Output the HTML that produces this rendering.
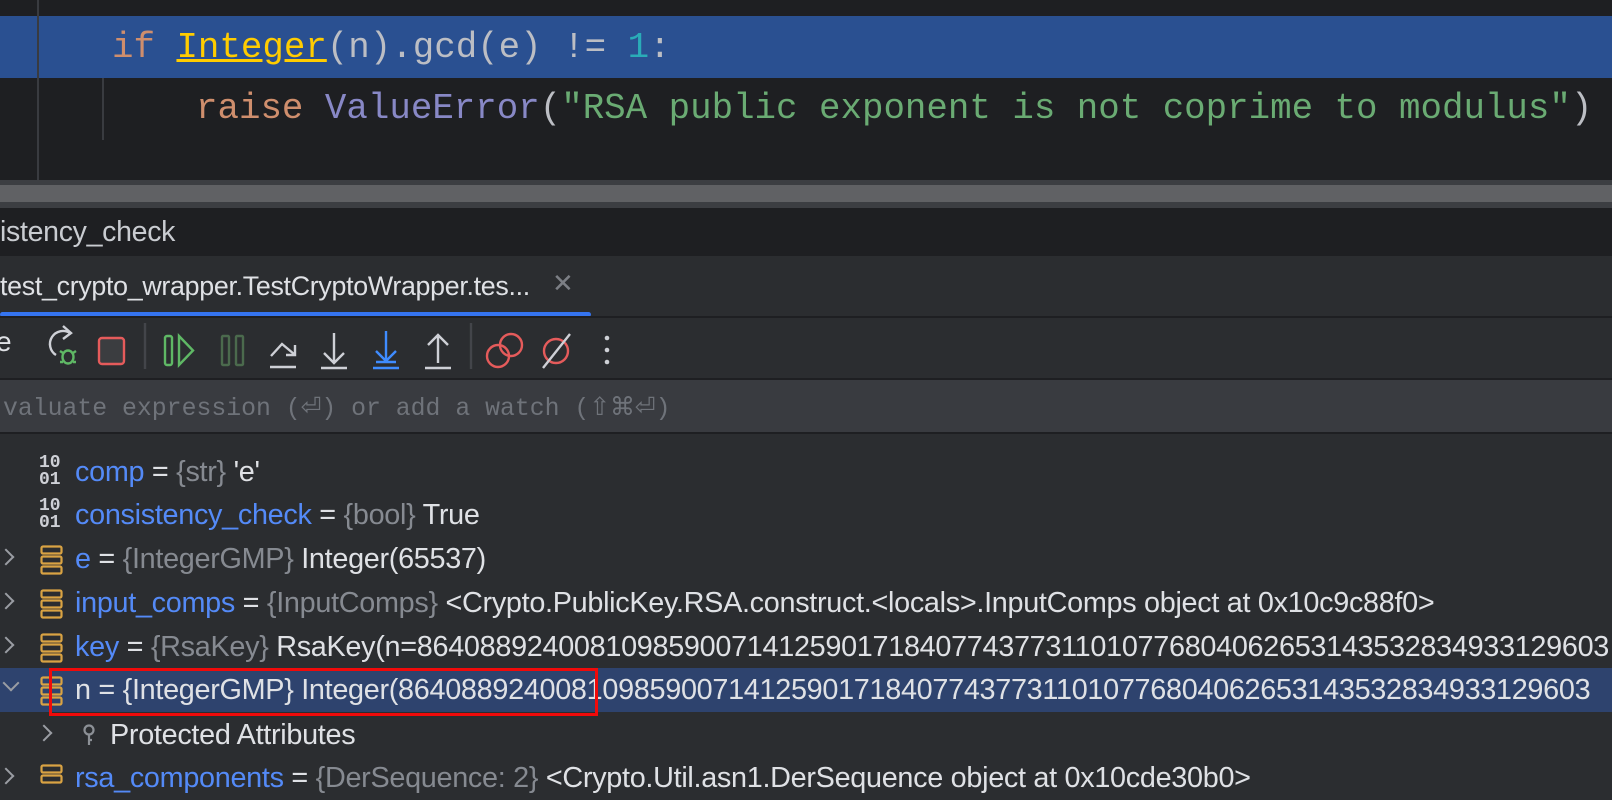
<!DOCTYPE html>
<html><head><meta charset="utf-8"><style>
*{margin:0;padding:0;box-sizing:border-box}
body{width:1612px;height:778px;overflow:hidden;background:#2b2d30;position:relative;font-family:"Liberation Sans",sans-serif}
.abs{position:absolute}
.mono{font-family:"Liberation Mono",monospace;white-space:pre}
.code{font-size:35.8px;line-height:40px}
.row{position:absolute;left:0;width:1612px;height:44px;font-size:28.8px;line-height:44px;white-space:nowrap;color:#dfe1e5;letter-spacing:-0.3px}
.nm{color:#548af7}.ty{color:#868a91}
.chev{position:absolute;top:14px;width:12px;height:12px;border-right:2px solid #9a9da3;border-bottom:2px solid #9a9da3}
.bin{position:absolute;left:39px;top:5px;font-family:"Liberation Mono",monospace;font-size:18px;line-height:17px;color:#ced0d6;letter-spacing:0;font-weight:bold}
</style></head><body>
<div class="abs" style="left:0;top:0;width:1612px;height:180px;background:#1e1f22"></div>
<div class="abs" style="left:0;top:16px;width:1612px;height:62px;background:#2a5091"></div>
<div class="abs" style="left:37px;top:0;width:2px;height:180px;background:#393b40"></div>
<div class="abs" style="left:102px;top:78px;width:2px;height:62px;background:#393b40"></div>
<div class="abs mono code" style="left:112px;top:28px;color:#bcbec4"><span style="color:#cf8e6d">if</span> <span style="color:#ffcc00;text-decoration:underline">Integer</span>(n).gcd(e) != <span style="color:#2aacb8">1</span>:</div>
<div class="abs mono code" style="left:196px;top:89px;color:#bcbec4"><span style="color:#cf8e6d">raise</span> <span style="color:#8888c6">ValueError</span>(<span style="color:#6aab73">"RSA public exponent is not coprime to modulus"</span>)</div>
<div class="abs" style="left:0;top:180px;width:1612px;height:28px;background:#3c3e42"></div>
<div class="abs" style="left:0;top:185px;width:1612px;height:17px;background:#606164"></div>
<div class="abs" style="left:0;top:208px;width:1612px;height:48px;background:#1e1f22"></div>
<div class="abs" style="left:0;top:216px;font-size:28.5px;line-height:32px;color:#c9ccd1;letter-spacing:-0.3px">istency_check</div>
<div class="abs" style="left:0;top:270px;font-size:26.8px;line-height:32px;color:#dfe1e5;letter-spacing:-0.3px">test_crypto_wrapper.TestCryptoWrapper.tes...</div>
<div class="abs" style="left:552px;top:268px;font-size:26px;color:#7c7f85">✕</div>
<div class="abs" style="left:0;top:312px;width:591px;height:5px;background:#3574f0;border-radius:3px"></div>
<div class="abs" style="left:0;top:316px;width:1612px;height:2px;background:#1e1f22"></div>
<div class="abs" style="left:-4px;top:326px;font-size:28px;color:#dfe1e5">e</div>
<svg class="abs" style="left:0;top:315px" width="640" height="62" viewBox="0 0 640 62" fill="none" stroke-width="2.4">
 <path d="M70 18 A13 13 0 1 0 56 40" stroke="#ced0d6"/><path d="M63 11 L71 18 L63 24" stroke="#ced0d6"/>
 <ellipse cx="68" cy="42" rx="5.5" ry="6.5" stroke="#5fb865"/><path d="M60 36l3 2M76 36l-3 2M60 47h3M73 47h3" stroke="#5fb865"/>
 <rect x="99" y="23" width="25" height="26" rx="3" stroke="#e55b5b" fill="#3b3d40"/>
 <line x1="145" y1="8" x2="145" y2="54" stroke="#43454a"/>
 <rect x="165" y="21" width="7" height="29" rx="2" stroke="#5fb865"/><path d="M179 21 L193 35.5 L179 50 Z" stroke="#5fb865"/>
 <rect x="222" y="21" width="7" height="29" rx="1" stroke="#4b6a4d"/><rect x="236" y="21" width="7" height="29" rx="1" stroke="#4b6a4d"/>
 <path d="M271 41 L282 29 L294 39 M295 30 v10 h-9 M270 52 h26" stroke="#ced0d6"/>
 <path d="M334 18 v30 M324 38 l10 10 10-10 M321 53 h26" stroke="#ced0d6"/>
 <path d="M386 16 v30 M376 36 l10 10 10-10 M373 53 h26 M376 47 h20" stroke="#3f8cff"/>
 <path d="M438 20 v28 M428 30 l10-10 10 10 M425 53 h26" stroke="#ced0d6"/>
 <line x1="471" y1="8" x2="471" y2="54" stroke="#43454a"/>
 <circle cx="498" cy="41" r="11" stroke="#e55b5b"/><circle cx="511" cy="30" r="11" stroke="#e55b5b"/>
 <circle cx="556" cy="36" r="12" stroke="#e55b5b"/><line x1="543" y1="53" x2="570" y2="19" stroke="#ced0d6"/>
 <circle cx="607" cy="23" r="2.3" fill="#ced0d6" stroke="none"/><circle cx="607" cy="35" r="2.3" fill="#ced0d6" stroke="none"/><circle cx="607" cy="47" r="2.3" fill="#ced0d6" stroke="none"/>
</svg>
<div class="abs" style="left:0;top:378px;width:1612px;height:2px;background:#1e1f22"></div>
<div class="abs" style="left:0;top:380px;width:1612px;height:52px;background:#393b40"></div>
<div class="abs mono" style="left:3px;top:392px;font-size:24.8px;line-height:34px;color:#6f737a">valuate expression (⏎) or add a watch (⇧⌘⏎)</div>
<div class="abs" style="left:0;top:432px;width:1612px;height:2px;background:#1e1f22"></div>
<div class="row" style="top:450px"><span class="bin">10<br>01</span><span class="abs" style="left:75px"><span class="nm">comp</span> = <span class="ty">{str}</span> 'e'</span></div>
<div class="row" style="top:493px"><span class="bin">10<br>01</span><span class="abs" style="left:75px"><span class="nm">consistency_check</span> = <span class="ty">{bool}</span> True</span></div>
<div class="row" style="top:537px"><div class="chev" style="left:0px;transform:rotate(-45deg)"></div><svg class="abs" style="left:40px;top:8px" width="24" height="30"><g fill="none" stroke="#d9a343" stroke-width="2.2"><rect x="1.5" y="1.5" width="20" height="7" rx="1.5"/><rect x="1.5" y="11.5" width="20" height="7" rx="1.5"/><rect x="1.5" y="21.5" width="20" height="7" rx="1.5"/></g></svg><span class="abs" style="left:75px"><span class="nm">e</span> = <span class="ty">{IntegerGMP}</span> Integer(65537)</span></div>
<div class="row" style="top:581px"><div class="chev" style="left:0px;transform:rotate(-45deg)"></div><svg class="abs" style="left:40px;top:8px" width="24" height="30"><g fill="none" stroke="#d9a343" stroke-width="2.2"><rect x="1.5" y="1.5" width="20" height="7" rx="1.5"/><rect x="1.5" y="11.5" width="20" height="7" rx="1.5"/><rect x="1.5" y="21.5" width="20" height="7" rx="1.5"/></g></svg><span class="abs" style="left:75px"><span class="nm">input_comps</span> = <span class="ty">{InputComps}</span> &lt;Crypto.PublicKey.RSA.construct.&lt;locals&gt;.InputComps object at 0x10c9c88f0&gt;</span></div>
<div class="row" style="top:625px"><div class="chev" style="left:0px;transform:rotate(-45deg)"></div><svg class="abs" style="left:40px;top:8px" width="24" height="30"><g fill="none" stroke="#d9a343" stroke-width="2.2"><rect x="1.5" y="1.5" width="20" height="7" rx="1.5"/><rect x="1.5" y="11.5" width="20" height="7" rx="1.5"/><rect x="1.5" y="21.5" width="20" height="7" rx="1.5"/></g></svg><span class="abs" style="left:75px"><span class="nm">key</span> = <span class="ty">{RsaKey}</span> RsaKey(n=8640889240081098590071412590171840774377311010776804062653143532834933129603</span></div>
<div class="row" style="top:668px;background:#2e436e"><div class="chev" style="left:5px;top:9px;transform:rotate(45deg)"></div><svg class="abs" style="left:40px;top:8px" width="24" height="30"><g fill="none" stroke="#d9a343" stroke-width="2.2"><rect x="1.5" y="1.5" width="20" height="7" rx="1.5"/><rect x="1.5" y="11.5" width="20" height="7" rx="1.5"/><rect x="1.5" y="21.5" width="20" height="7" rx="1.5"/></g></svg><span class="abs" style="left:75px">n = {IntegerGMP} Integer(8640889240081098590071412590171840774377311010776804062653143532834933129603</span></div>
<div class="abs" style="left:49px;top:668px;width:549px;height:48px;border:3px solid #f00a0a"></div>
<div class="row" style="top:713px"><div class="chev" style="left:38px;transform:rotate(-45deg)"></div><svg class="abs" style="left:82px;top:11px" width="14" height="24"><circle cx="7" cy="6" r="4.5" fill="none" stroke="#8c9096" stroke-width="2.2"/><path d="M7 10v11M7 16h3" stroke="#8c9096" stroke-width="2.2"/></svg><span class="abs" style="left:110px">Protected Attributes</span></div>
<div class="row" style="top:756px"><div class="chev" style="left:0px;transform:rotate(-45deg)"></div><svg class="abs" style="left:40px;top:8px" width="24" height="30"><g fill="none" stroke="#d9a343" stroke-width="2.2"><rect x="1.5" y="1.5" width="20" height="7" rx="1.5"/><rect x="1.5" y="11.5" width="20" height="7" rx="1.5"/></g></svg><span class="abs" style="left:75px"><span class="nm">rsa_components</span> = <span class="ty">{DerSequence: 2}</span> &lt;Crypto.Util.asn1.DerSequence object at 0x10cde30b0&gt;</span></div>
</body></html>
